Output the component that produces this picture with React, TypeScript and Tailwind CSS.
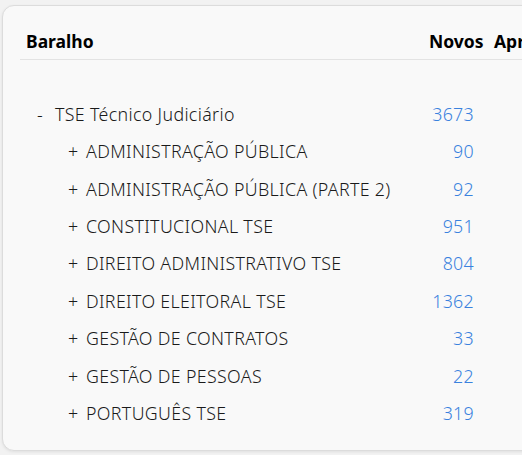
import React from "react";

const children: [string, number][] = [
  ["ADMINISTRAÇÃO PÚBLICA", 90],
  ["ADMINISTRAÇÃO PÚBLICA (PARTE 2)", 92],
  ["CONSTITUCIONAL TSE", 951],
  ["DIREITO ADMINISTRATIVO TSE", 804],
  ["DIREITO ELEITORAL TSE", 1362],
  ["GESTÃO DE CONTRATOS", 33],
  ["GESTÃO DE PESSOAS", 22],
  ["PORTUGUÊS TSE", 319],
];

export default function App() {
  return (
    <div
      className="w-[522px] h-[455px] overflow-hidden bg-[#f2f2f2] text-[#1a1a1a]"
      style={{ fontFamily: '"Noto Sans", "Open Sans", sans-serif' }}
    >
      <div className="ml-[2px] mt-[5px] w-[600px] h-[446px] rounded-xl border border-[#dcdcdc] bg-[#f9f9f9] shadow-[0_1px_3px_rgba(0,0,0,0.08)] pt-[17px] pl-[17px]">
        <div className="flex h-[37px] items-center border-b border-[#e3e3e3] text-[17.5px] font-bold text-black">
          <div className="w-[404px] pl-[6px]">Baralho</div>
          <div className="w-[70px] pl-[5px]">Novos</div>
          <div className="whitespace-nowrap">Aprender</div>
        </div>
        <div className="h-[35.6px]" />
        <div className="text-[17.8px] font-light tracking-[0.35px]">
          <div className="flex h-[37.375px] items-center">
            <div className="w-[404px] flex">
              <span className="w-[35px] pl-[17px]">-</span>
              <span>TSE Técnico Judiciário</span>
            </div>
            <div className="w-[70px] pr-[20px] text-right text-[#3a82de] tracking-[0.3px]">3673</div>
          </div>
          {children.map(([name, n]) => (
            <div key={name} className="flex h-[37.375px] items-center">
              <div className="w-[404px] flex">
                <span className="w-[66px] pl-[48px]">+</span>
                <span className="whitespace-nowrap">{name}</span>
              </div>
              <div className="w-[70px] pr-[20px] text-right text-[#3a82de] tracking-[0.3px]">{n}</div>
            </div>
          ))}
        </div>
      </div>
    </div>
  );
}
